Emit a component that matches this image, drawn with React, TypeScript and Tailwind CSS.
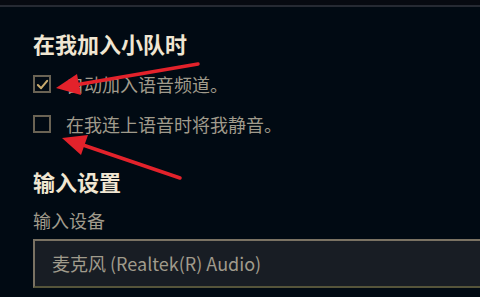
import React from "react";

const FONT = { fontFamily: '"Noto Sans CJK SC", "Noto Sans", sans-serif' };

function Checkbox({ checked, label }: { checked?: boolean; label: string }) {
  return (
    <div className="flex h-[18px] items-center gap-[15px]">
      <span className="flex h-[18px] w-[18px] flex-none items-center justify-center border-2 border-[#6a6354]">
        {checked && (
          <svg viewBox="0 0 14 14" className="h-[13px] w-[13px]">
            <path d="M2 7.5 L5.5 11 L12 3" fill="none" stroke="#c8aa6e" strokeWidth="2.2" strokeLinecap="round" strokeLinejoin="round" />
          </svg>
        )}
      </span>
      <span className="text-[18px] leading-[18px] text-[#a09b8c]">{label}</span>
    </div>
  );
}

export default function App() {
  return (
    <div className="relative h-[297px] w-[480px] overflow-hidden bg-[#010a13]" style={FONT}>
      <div className="h-[5px] bg-[#070a11]" />
      <div className="h-[2px] bg-[#262a33]" />

      <div className="flex flex-col pl-[33px]">
        <h2 className="mt-[25px] h-[22px] text-[22px] font-bold leading-[22px] text-[#f0e6d2]">在我加入小队时</h2>
        <div className="mt-[21px]">
          <Checkbox checked label="自动加入语音频道。" />
        </div>
        <div className="mt-[22px]">
          <Checkbox label="在我连上语音时将我静音。" />
        </div>
        <h2 className="mt-[37px] h-[22px] text-[22px] font-bold leading-[22px] text-[#f0e6d2]">输入设置</h2>
        <div className="mt-[19px] h-[18px] text-[18px] leading-[18px] text-[#a09b8c]">输入设备</div>
        <div className="mt-[10px] flex h-[49px] w-[470px] flex-none items-center border-2 border-r-0 border-[#7a7263] border-b-[#55543a] bg-[#181d24] pl-[17px]">
          <span className="text-[18px] text-[#a09b8c]">麦克风 (Realtek(R) Audio)</span>
        </div>
      </div>

      {/* annotation arrows */}
      <svg className="pointer-events-none absolute left-0 top-0" width="480" height="297">
        <line x1="198" y1="64" x2="78" y2="84.5" stroke="#e3222b" strokeWidth="3.5" strokeLinecap="round" />
        <polygon points="56,88 77,74 81,95" fill="#e3222b" />
        <line x1="180" y1="178" x2="83" y2="145" stroke="#e3222b" strokeWidth="3.5" strokeLinecap="round" />
        <polygon points="62,138 88,135 81,155" fill="#e3222b" />
      </svg>
    </div>
  );
}
